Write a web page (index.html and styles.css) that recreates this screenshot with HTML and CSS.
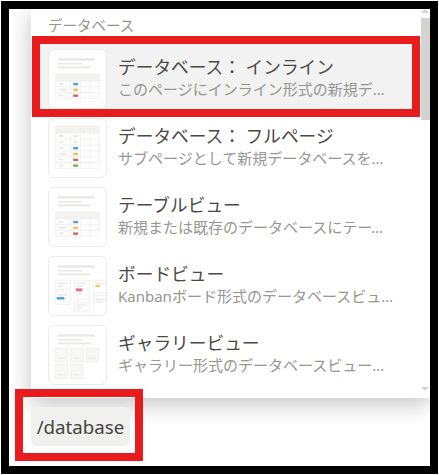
FILE: index.html
```html
<!DOCTYPE html>
<html lang="ja">
<head>
    <meta charset="UTF-8">
    <meta name="viewport" content="width=device-width, initial-scale=1.0">
    <title>データベース</title>
    <link rel="stylesheet" href="styles.css">
</head>
<body>
    <div class="frame">
        <div class="menu">
            <div class="menu-list">
                <div class="menu-heading">データベース</div>

                <div class="menu-item active">
                    <svg class="thumb" viewBox="0 0 59 60">
                        <g class="bars"><rect x="9" y="8.5" width="38" height="2.5"/><rect x="9" y="13.5" width="25" height="1.5"/><rect x="9" y="17" width="34" height="2"/></g>
                        <rect class="head" x="7" y="25" width="45" height="7"/>
                        <path class="grid" d="M7 25H52V50H7ZM7 32H52M7 38H52M7 44H52M22.5 25V50M32.5 25V50M42.5 25V50"/>
                        <g class="bars"><rect x="10" y="34" width="5" height="2"/><rect x="10" y="40" width="8" height="2"/><rect x="10" y="46" width="5" height="2"/></g>
                        <rect class="blue" x="25" y="34" width="5" height="2.5"/><rect class="yellow" x="25" y="40" width="5" height="2.5"/><rect class="red" x="25" y="46" width="5" height="2.5"/>
                    </svg>
                    <div class="menu-text">
                        <div class="menu-title">データベース： インライン</div>
                        <div class="menu-desc">このページにインライン形式の新規データベースを追加します。</div>
                    </div>
                </div>

                <div class="menu-item">
                    <svg class="thumb" viewBox="0 0 59 60">
                        <rect class="head" x="7" y="7" width="45" height="7.5"/>
                        <path class="grid" d="M7 7H52V51H7ZM7 14.5H52M7 21H52M7 27H52M7 33H52M7 39H52M7 45H52M22.5 7V51M32.5 7V51M42.5 7V51"/>
                        <g class="bars"><rect x="10" y="16.5" width="5" height="2"/><rect x="10" y="23" width="5" height="2"/><rect x="10" y="29" width="5" height="2"/><rect x="10" y="35" width="8" height="2"/><rect x="10" y="41" width="5" height="2"/><rect x="10" y="47" width="5" height="2"/><rect x="25" y="16.5" width="5" height="2"/><rect x="25" y="23" width="5" height="2"/></g>
                        <rect class="blue" x="25" y="29" width="5" height="2.5"/><rect class="yellow" x="25" y="35" width="5" height="2.5"/><rect class="red" x="25" y="41" width="5" height="2.5"/><rect class="green" x="25" y="47" width="5" height="2.5"/>
                    </svg>
                    <div class="menu-text">
                        <div class="menu-title">データベース： フルページ</div>
                        <div class="menu-desc">サブページとして新規データベースを追加します。</div>
                    </div>
                </div>

                <div class="menu-item">
                    <svg class="thumb" viewBox="0 0 59 60">
                        <g class="bars"><rect x="9" y="8.5" width="38" height="2.5"/><rect x="9" y="13.5" width="25" height="1.5"/><rect x="9" y="17" width="34" height="2"/></g>
                        <rect class="head" x="7" y="25" width="45" height="7"/>
                        <path class="grid" d="M7 25H52V50H7ZM7 32H52M7 38H52M7 44H52M22.5 25V50M32.5 25V50M42.5 25V50"/>
                        <g class="bars"><rect x="10" y="34" width="5" height="2"/><rect x="10" y="40" width="8" height="2"/><rect x="10" y="46" width="5" height="2"/></g>
                        <rect class="blue" x="25" y="34" width="5" height="2.5"/><rect class="yellow" x="25" y="40" width="5" height="2.5"/><rect class="red" x="25" y="46" width="5" height="2.5"/>
                    </svg>
                    <div class="menu-text">
                        <div class="menu-title">テーブルビュー</div>
                        <div class="menu-desc">新規または既存のデータベースにテーブルビューを追加します。</div>
                    </div>
                </div>

                <div class="menu-item">
                    <svg class="thumb" viewBox="0 0 59 60">
                        <g class="bars"><rect x="9" y="8.5" width="38" height="2.5"/><rect x="9" y="13.5" width="25" height="1.5"/><rect x="9" y="17" width="34" height="2"/></g>
                        <g class="card"><rect x="6.5" y="24" width="15.5" height="9.5"/><rect x="26.5" y="24" width="15.5" height="19.5"/><rect x="46" y="24" width="15" height="13"/><rect x="6.5" y="36" width="15.5" height="13"/><rect x="26.5" y="47" width="15.5" height="9"/><rect x="46" y="40" width="15" height="22"/></g>
                        <g class="bars"><rect x="9" y="26.5" width="10" height="1.5"/><rect x="9" y="29.5" width="6" height="1.5"/><rect x="28.5" y="26.5" width="10" height="1.5"/><rect x="28.5" y="29.5" width="6" height="1.5"/><rect x="28.5" y="37.5" width="6" height="1.5"/><rect x="48" y="26.5" width="11" height="1.5"/><rect x="8.5" y="38.5" width="10" height="1.5"/><rect x="28.5" y="49" width="10" height="1.5"/><rect x="28.5" y="52" width="6" height="1.5"/><rect x="48" y="43" width="11" height="1.5"/><rect x="48" y="46" width="7" height="1.5"/></g>
                        <rect class="coral" x="28" y="32.5" width="6.5" height="3"/><rect class="yellow" x="48" y="29" width="5" height="2"/><rect class="sky" x="8" y="41.5" width="8" height="2.5"/>
                    </svg>
                    <div class="menu-text">
                        <div class="menu-title">ボードビュー</div>
                        <div class="menu-desc">Kanbanボード形式のデータベースビューを追加します。</div>
                    </div>
                </div>

                <div class="menu-item">
                    <svg class="thumb" viewBox="0 0 59 60">
                        <g class="bars"><rect x="9" y="8.5" width="38" height="2.5"/><rect x="9" y="13.5" width="25" height="1.5"/><rect x="9" y="17" width="34" height="2"/></g>
                        <g class="tile"><rect x="6.5" y="23" width="13" height="14"/><rect x="22.5" y="23" width="13" height="14"/><rect x="38.5" y="23" width="13" height="14"/><rect x="6.5" y="40" width="13" height="14.5"/><rect x="22.5" y="40" width="13" height="14.5"/></g>
                        <g class="bars"><rect x="9" y="32.5" width="8" height="1"/><rect x="25" y="32.5" width="8" height="1"/><rect x="41" y="32.5" width="8" height="1"/><rect x="9" y="50" width="8" height="1"/><rect x="25" y="50" width="8" height="1"/></g>
                    </svg>
                    <div class="menu-text">
                        <div class="menu-title">ギャラリービュー</div>
                        <div class="menu-desc">ギャラリー形式のデータベースビューを追加します。</div>
                    </div>
                </div>
            </div>

            <div class="scrollbar">
                <span class="arrow-up"></span>
                <span class="scroll-thumb"></span>
                <span class="arrow-down"></span>
            </div>
        </div>

        <div class="command">/database</div>

        <div class="mark mark-item"></div>
        <div class="mark mark-command"></div>
    </div>
</body>
</html>
```

FILE: styles.css
```css
* {
    margin: 0;
    padding: 0;
    box-sizing: border-box;
}

body {
    background-color: #fff;
    font-family: 'Noto Sans', 'Noto Sans CJK JP', sans-serif;
    padding: 1px 0 0 1px;
}

.frame {
    position: relative;
    width: 437px;
    height: 473px;
    border: 8px solid #000;
    background-color: #fff;
    overflow: hidden;
}

.menu {
    display: flex;
    width: 399px;
    height: 389px;
    margin-left: 22px;
    background-color: #fff;
    box-shadow: 0 6px 22px rgba(0, 0, 0, 0.24);
    overflow: hidden;
}

.menu-list {
    flex: 1;
    min-width: 0;
    overflow: hidden;
}

.menu-heading {
    height: 35px;
    padding: 6px 0 0 17px;
    font-size: 14.5px;
    line-height: 20px;
    color: #96958f;
}

.menu-item {
    display: flex;
    align-items: flex-start;
    gap: 11px;
    height: 69px;
    padding: 5px 8px 0 17px;
}

.menu-item.active {
    background-color: #f2f2f2;
}

.thumb {
    flex: none;
    width: 59px;
    height: 60px;
    background-color: #fff;
    border: 1px solid #ebebea;
    border-radius: 6px;
}

.menu-text {
    flex: 1;
    min-width: 0;
    padding-top: 6px;
}

.menu-title {
    font-size: 17.7px;
    line-height: 24px;
    color: #4b4944;
    white-space: nowrap;
}

.menu-desc {
    width: 277px;
    font-size: 15px;
    line-height: 20px;
    color: #979691;
    white-space: nowrap;
    overflow: hidden;
    text-overflow: ellipsis;
}

/* thumbnail parts */
.bars rect {
    fill: #e8e8e7;
}

.head {
    fill: #f2f2f1;
}

.grid {
    fill: none;
    stroke: #efefee;
    stroke-width: 1;
}

.card rect {
    fill: #fff;
    stroke: #efefee;
    stroke-width: 1;
}

.tile rect {
    fill: #f7f7f6;
    stroke: #efefee;
    stroke-width: 1;
}

.blue {
    fill: #5a9fd8;
}

.yellow {
    fill: #f5c05a;
}

.red {
    fill: #d9605f;
}

.green {
    fill: #6fb356;
}

.coral {
    fill: #f0707a;
}

.sky {
    fill: #3fa5e0;
}

.scrollbar {
    position: relative;
    flex: none;
    width: 9px;
    background-color: #fff;
}

.scroll-thumb {
    position: absolute;
    top: 9px;
    left: 0;
    width: 9px;
    height: 102px;
    background-color: #d3d3d0;
}

.arrow-up,
.arrow-down {
    position: absolute;
    left: 0;
    border-left: 4.5px solid transparent;
    border-right: 4.5px solid transparent;
}

.arrow-up {
    top: 0;
    border-bottom: 4px solid #d3d3d0;
}

.arrow-down {
    bottom: 7px;
    border-top: 4px solid #d3d3d0;
}

.command {
    width: 99px;
    height: 39px;
    margin: 9px 0 0 22px;
    background-color: #f0f0ee;
    border-radius: 6px;
    font-size: 18.7px;
    line-height: 39px;
    text-align: center;
    color: #46443f;
}

/* red annotation boxes drawn over the screenshot */
.mark {
    position: absolute;
    border: 8px solid #e81c1c;
}

.mark-item {
    top: 27px;
    left: 23px;
    width: 388px;
    height: 81px;
}

.mark-command {
    top: 380px;
    left: 6px;
    width: 128px;
    height: 72px;
}
```
